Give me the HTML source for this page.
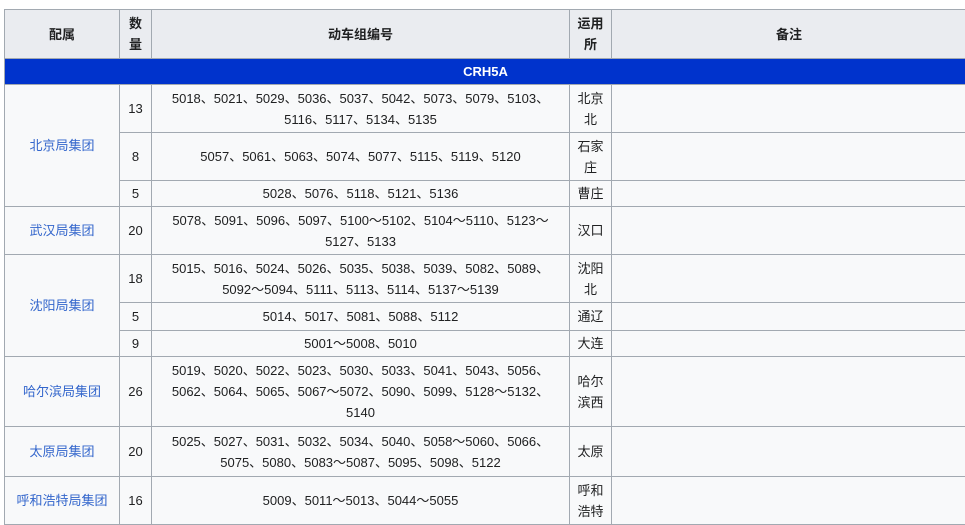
<!DOCTYPE html>
<html><head><meta charset="utf-8"><style>
body{margin:0;background:#fff;font-family:"Liberation Sans","Noto Sans CJK SC",sans-serif;font-size:13px;color:#202122;}
table{position:absolute;left:4px;top:9px;border-collapse:collapse;width:963px;table-layout:fixed;background:#f8f9fa;}
td,th{border:1px solid #a2a9b1;text-align:center;padding:0 4px;line-height:21px;}
th{background:#eaecf0;font-weight:bold;}
a{color:#3366cc;text-decoration:none;}
.b{background:#0033cc;color:#fff;font-weight:bold;height:25px;}
</style></head><body>
<table>
<col style="width:115px"><col style="width:32px"><col style="width:418px"><col style="width:42px"><col>
<tr style="height:49px"><th>配属</th><th>数<br>量</th><th>动车组编号</th><th>运用<br>所</th><th>备注</th></tr>
<tr><td colspan="5" class="b">CRH5A</td></tr>
<tr style="height:48px"><td rowspan="3"><a>北京局集团</a></td><td>13</td><td>5018、5021、5029、5036、5037、5042、5073、5079、5103、<br>5116、5117、5134、5135</td><td>北京<br>北</td><td></td></tr>
<tr style="height:48px"><td>8</td><td>5057、5061、5063、5074、5077、5115、5119、5120</td><td>石家<br>庄</td><td></td></tr>
<tr style="height:26px"><td>5</td><td>5028、5076、5118、5121、5136</td><td>曹庄</td><td></td></tr>
<tr style="height:48px"><td><a>武汉局集团</a></td><td>20</td><td>5078、5091、5096、5097、5100～5102、5104～5110、5123～<br>5127、5133</td><td>汉口</td><td></td></tr>
<tr style="height:48px"><td rowspan="3"><a>沈阳局集团</a></td><td>18</td><td>5015、5016、5024、5026、5035、5038、5039、5082、5089、<br>5092～5094、5111、5113、5114、5137～5139</td><td>沈阳<br>北</td><td></td></tr>
<tr style="height:28px"><td>5</td><td>5014、5017、5081、5088、5112</td><td>通辽</td><td></td></tr>
<tr style="height:26px"><td>9</td><td>5001～5008、5010</td><td>大连</td><td></td></tr>
<tr style="height:70px"><td><a>哈尔滨局集团</a></td><td>26</td><td>5019、5020、5022、5023、5030、5033、5041、5043、5056、<br>5062、5064、5065、5067～5072、5090、5099、5128～5132、<br>5140</td><td>哈尔<br>滨西</td><td></td></tr>
<tr style="height:50px"><td><a>太原局集团</a></td><td>20</td><td>5025、5027、5031、5032、5034、5040、5058～5060、5066、<br>5075、5080、5083～5087、5095、5098、5122</td><td>太原</td><td></td></tr>
<tr style="height:48px"><td><a>呼和浩特局集团</a></td><td>16</td><td>5009、5011～5013、5044～5055</td><td>呼和<br>浩特</td><td></td></tr>
</table>
</body></html>
